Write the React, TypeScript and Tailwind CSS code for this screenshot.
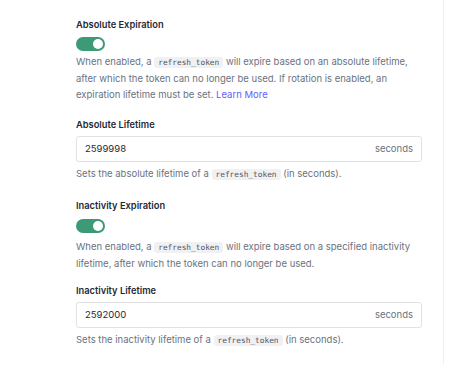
import React from "react";

const Code: React.FC<{ children: React.ReactNode }> = ({ children }) => (
  <code className="rounded-[3px] bg-[#f1f1f3] px-[4px] py-[1px] font-['DejaVu_Sans_Mono',monospace] text-[7.8px] text-[#4b5563]">
    {children}
  </code>
);

const Toggle: React.FC = () => (
  <div className="flex h-[14px] w-[29px] items-center rounded-full bg-[#3d9a76] px-[2px]">
    <div className="ml-auto h-[10px] w-[10px] rounded-full bg-white" />
  </div>
);

const LifetimeInput: React.FC<{ value: string }> = ({ value }) => (
  <div className="flex h-[26px] items-center justify-between rounded-[3px] border border-[#e2e2e5] px-[8px] text-[9.5px]">
    <span className="text-[#1f2937]">{value}</span>
    <span className="text-[#6b7280]">seconds</span>
  </div>
);

export default function App() {
  return (
    <div className="h-[365px] w-[474px] bg-white font-['Inter',sans-serif]">
      <div className="h-full w-[444px] border-r border-[#f0f0f2] pl-[76px] pr-[21px] pt-[17px] text-[9.5px] leading-[16px]">
        <h3 className="text-[9.3px] font-semibold text-[#1f2937]">Absolute Expiration</h3>
        <div className="mt-[4px]">
          <Toggle />
        </div>
        <p className="mt-[3px] text-[#6b7280]">
          When enabled, a <Code>refresh_token</Code> will expire based on an
          absolute lifetime, after which the token can no longer be used. If
          rotation is enabled, an expiration lifetime must be set.{" "}
          <span className="text-[#635dff]">Learn More</span>
        </p>

        <h3 className="mt-[14px] text-[9.3px] font-semibold text-[#1f2937]">
          Absolute Lifetime
        </h3>
        <div className="mt-[3px]">
          <LifetimeInput value="2599998" />
        </div>
        <p className="mt-[4px] text-[#6b7280]">
          Sets the absolute lifetime of a <Code>refresh_token</Code> (in
          seconds).
        </p>

        <h3 className="mt-[15px] text-[9.3px] font-semibold text-[#1f2937]">
          Inactivity Expiration
        </h3>
        <div className="mt-[5px]">
          <Toggle />
        </div>
        <p className="mt-[6px] text-[#6b7280]">
          When enabled, a <Code>refresh_token</Code> will expire based on a
          specified inactivity lifetime, after which the token can no longer be
          used.
        </p>

        <h3 className="mt-[11px] text-[9.3px] font-semibold text-[#1f2937]">
          Inactivity Lifetime
        </h3>
        <div className="mt-[3px]">
          <LifetimeInput value="2592000" />
        </div>
        <p className="mt-[4px] text-[#6b7280]">
          Sets the inactivity lifetime of a <Code>refresh_token</Code> (in
          seconds).
        </p>
      </div>
    </div>
  );
}
